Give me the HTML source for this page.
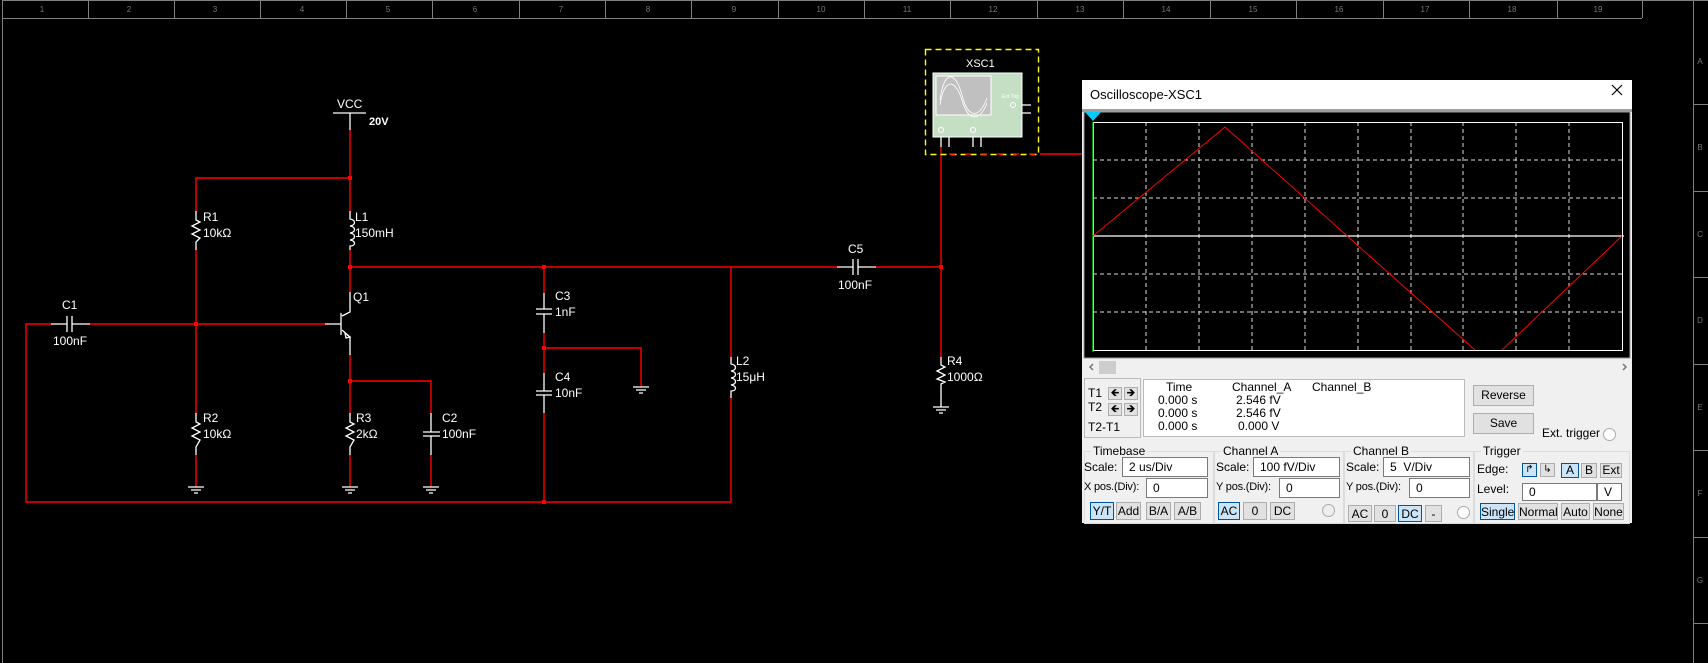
<!DOCTYPE html>
<html><head><meta charset="utf-8">
<style>
html,body{margin:0;padding:0;background:#000;}
body{width:1708px;height:663px;overflow:hidden;position:relative;font-family:"Liberation Sans",sans-serif;}
svg{position:absolute;left:0;top:0;}
.btn{position:absolute;background:#e1e1e1;border:1px solid #adadad;box-sizing:border-box;font-size:12px;text-align:center;line-height:16px;}
.sel{background:#cce4f7;border-color:#005499;}
.inp{position:absolute;background:#fff;border:1px solid #7a7a7a;box-sizing:border-box;font-size:12px;line-height:18px;padding-left:6px;}
.lab{position:absolute;font-size:12px;white-space:nowrap;}
.sm{font-size:11px;letter-spacing:-0.2px;}
.grp{position:absolute;border:1px solid #dcdcdc;box-sizing:border-box;}
.gt{position:absolute;background:#f0f0f0;padding:0 2px;font-size:12px;top:-8px;left:6px;line-height:14px;}
.rad{position:absolute;width:13px;height:13px;border-radius:50%;border:1px solid #aaa;background:#fff;box-sizing:border-box;}
</style></head><body>
<svg width="1708" height="663" viewBox="0 0 1708 663" font-family="Liberation Sans, sans-serif">
<g stroke="#808080" stroke-width="1" fill="none">
<line x1="2" y1="0.5" x2="1708" y2="0.5"/>
<line x1="2" y1="18.5" x2="1642" y2="18.5"/>
<line x1="2.5" y1="0" x2="2.5" y2="663"/>
<line x1="1693.5" y1="0" x2="1693.5" y2="663"/>
<line x1="1642.5" y1="0" x2="1642.5" y2="18"/>
<line x1="88.5" y1="0" x2="88.5" y2="18"/><line x1="174.5" y1="0" x2="174.5" y2="18"/><line x1="260.5" y1="0" x2="260.5" y2="18"/><line x1="346.5" y1="0" x2="346.5" y2="18"/><line x1="432.5" y1="0" x2="432.5" y2="18"/><line x1="519.5" y1="0" x2="519.5" y2="18"/><line x1="605.5" y1="0" x2="605.5" y2="18"/><line x1="691.5" y1="0" x2="691.5" y2="18"/><line x1="778.5" y1="0" x2="778.5" y2="18"/><line x1="864.5" y1="0" x2="864.5" y2="18"/><line x1="950.5" y1="0" x2="950.5" y2="18"/><line x1="1037.5" y1="0" x2="1037.5" y2="18"/><line x1="1123.5" y1="0" x2="1123.5" y2="18"/><line x1="1210.5" y1="0" x2="1210.5" y2="18"/><line x1="1296.5" y1="0" x2="1296.5" y2="18"/><line x1="1383.5" y1="0" x2="1383.5" y2="18"/><line x1="1469.5" y1="0" x2="1469.5" y2="18"/><line x1="1557.5" y1="0" x2="1557.5" y2="18"/>
<line x1="1693" y1="104.5" x2="1708" y2="104.5"/><line x1="1693" y1="191.5" x2="1708" y2="191.5"/><line x1="1693" y1="277.5" x2="1708" y2="277.5"/><line x1="1693" y1="364.5" x2="1708" y2="364.5"/><line x1="1693" y1="450.5" x2="1708" y2="450.5"/><line x1="1693" y1="537.5" x2="1708" y2="537.5"/><line x1="1693" y1="623.5" x2="1708" y2="623.5"/>
</g>
<g fill="#777" font-size="8" text-anchor="middle">
<text x="42" y="12">1</text><text x="129" y="12">2</text><text x="215" y="12">3</text><text x="302" y="12">4</text><text x="388" y="12">5</text><text x="475" y="12">6</text><text x="561" y="12">7</text><text x="648" y="12">8</text><text x="734" y="12">9</text><text x="821" y="12">10</text><text x="907" y="12">11</text><text x="993" y="12">12</text><text x="1080" y="12">13</text><text x="1166" y="12">14</text><text x="1253" y="12">15</text><text x="1339" y="12">16</text><text x="1425" y="12">17</text><text x="1512" y="12">18</text><text x="1598" y="12">19</text>
<text x="1700" y="64">A</text><text x="1700" y="150">B</text><text x="1700" y="237">C</text><text x="1700" y="323">D</text><text x="1700" y="410">E</text><text x="1700" y="496">F</text><text x="1700" y="583">G</text>
</g>
<g stroke="#f00" stroke-width="1.4" fill="none">
<path d="M350 130V211M350 250V292"/>
<path d="M196 211V178H350"/>
<path d="M196 250V413M196 455V487"/>
<path d="M90 324H325"/>
<path d="M51 324H26V502H731V398M731 357V267"/>
<path d="M350 355V413M350 455V487"/>
<path d="M350 381H431V413M431 455V487"/>
<path d="M350 267H837M876 267H941"/>
<path d="M544 267V293M544 333V373M544 413V502"/>
<path d="M544 348H641V387"/>
<path d="M941 147V357"/>
<path d="M1040 154H1084"/>
</g>
<g fill="#f00">
<rect x="348" y="176" width="4" height="4"/><rect x="194" y="322" width="4" height="4"/><rect x="348" y="265" width="4" height="4"/><rect x="348" y="379" width="4" height="4"/><rect x="542" y="265" width="4" height="4"/><rect x="542" y="346" width="4" height="4"/><rect x="542" y="500" width="4" height="4"/><rect x="939" y="265" width="4" height="4"/>
</g>
<g stroke="#fff" stroke-width="1.3" fill="none">
<path d="M333 113H366M350 113V130"/>
<path d="M196 211V220L200 222L192 226L200 230L192 234L200 238L196 242V250"/>
<path d="M350 211V219C356 220 356 225 350 226C356 227 356 232 350 233C356 234 356 239 350 240C356 241 356 246 350 246V250"/>
<path d="M350 292V312L342 316M341 313V335M325 324H341M342 330L350 337V355"/>
<path d="M345 333L350 337L346 338Z"/>
<path d="M196 413V422L200 424L192 428L200 432L192 436L200 440L196 447V455"/>
<path d="M350 413V422L354 424L346 428L354 432L346 436L354 440L350 447V455"/>
<path d="M431 413V432M423 432H440M423 436H440M431 436V455"/>
<path d="M51 324H67M67 316V332M72 316V332M72 324H90"/>
<path d="M837 267H853M853 259V275M858 259V275M858 267H876"/>
<path d="M544 293V309M536 309H552M536 314H552M544 314V333"/>
<path d="M544 373V391M536 391H552M536 395H552M544 395V413"/>
<path d="M731 357V364C737 365 737 370 731 371C737 372 737 377 731 378C737 379 737 384 731 385C737 386 737 391 731 391V398"/>
<path d="M941 357V365L945 367L937 371L945 375L937 379L945 382L941 384V388"/>
<path d="M188 487H204M191 490H201M194 493H198"/>
<path d="M342 487H358M345 490H355M348 493H352"/>
<path d="M423 487H439M426 490H436M429 493H433"/>
<path d="M633 387H649M636 390H646M639 393H643"/>
<path d="M941 388V407M933 407H949M936 410H946M939 413H943"/>
<path d="M941 130V147M949 130V147M973 130V147M981 130V147M949 130H941"/>
<path d="M1013 105H1031M1017 113H1031M1017 105V113"/>
</g>
<rect x="925.5" y="49.5" width="113" height="105" fill="none" stroke="#ff0" stroke-width="1.4" stroke-dasharray="6,4"/>
<path d="M949 154H1040" stroke="#f00" stroke-width="1.4" stroke-dasharray="6,10"/>
<rect x="933" y="73" width="89" height="64" fill="#c4dfc4" stroke="#fff" stroke-width="1"/>
<rect x="936" y="76" width="55" height="39" fill="#c0c0c0" stroke="#fff" stroke-width="1"/>
<path d="M940 100C944 70 955 70 962 95C968 120 980 118 987 98M940 105C944 78 955 78 962 100C968 122 980 122 987 103" stroke="#fff" fill="none" stroke-width="0.8"/>
<circle cx="941" cy="130" r="2.5" fill="none" stroke="#fff"/><circle cx="973" cy="130" r="2.5" fill="none" stroke="#fff"/><circle cx="1013" cy="105" r="2.5" fill="none" stroke="#fff"/>
<text x="1002" y="98" fill="#fff" font-size="5">Ext Trig</text>
<g fill="#fff" font-size="12">
<text x="337" y="108">VCC</text>
<text x="369" y="125" font-weight="bold" font-size="11">20V</text>
<text x="203" y="221">R1</text><text x="203" y="237">10kΩ</text>
<text x="355" y="221">L1</text><text x="355" y="237">150mH</text>
<text x="353" y="301">Q1</text>
<text x="62" y="309">C1</text><text x="53" y="345">100nF</text>
<text x="203" y="422">R2</text><text x="203" y="438">10kΩ</text>
<text x="356" y="422">R3</text><text x="356" y="438">2kΩ</text>
<text x="442" y="422">C2</text><text x="442" y="438">100nF</text>
<text x="555" y="300">C3</text><text x="555" y="316">1nF</text>
<text x="555" y="381">C4</text><text x="555" y="397">10nF</text>
<text x="736" y="365">L2</text><text x="736" y="381">15μH</text>
<text x="848" y="253">C5</text><text x="838" y="289">100nF</text>
<text x="947" y="365">R4</text><text x="947" y="381">1000Ω</text>
<text x="966" y="67" font-size="11">XSC1</text>
</g>
<rect x="1082" y="80" width="550" height="443" fill="#f0f0f0"/>
<rect x="1082" y="80" width="550" height="29" fill="#fff"/>
<rect x="1082" y="109" width="550" height="3" fill="#a0a0a0"/>
<rect x="1084" y="112" width="546" height="246" fill="#000" stroke="#9a9a9a" stroke-width="1"/>
<g stroke="#ddd" stroke-width="1" stroke-dasharray="4,3">
<path d="M1146 122V350M1199 122V350M1252 122V350M1305 122V350M1358 122V350M1411 122V350M1463 122V350M1516 122V350M1569 122V350"/>
<path d="M1093 160H1622M1093 198H1622M1093 274H1622M1093 312H1622"/>
</g>
<rect x="1093.5" y="122.5" width="529" height="228" fill="none" stroke="#fff" stroke-width="1"/>
<path d="M1093 236H1624" stroke="#fff" stroke-width="1.2"/>
<path d="M1093 122V352" stroke="#0f0" stroke-width="1.2"/>
<path d="M1085 112H1101L1093 121Z" fill="#0cf"/>
<path d="M1093 236L1225 127L1475 350M1502 350L1622 236" stroke="#f00" stroke-width="1" fill="none"/>
<path d="M1612 85L1622 95M1622 85L1612 95" stroke="#000" stroke-width="1.2"/>
<text x="1090" y="99" font-size="13" fill="#000">Oscilloscope-XSC1</text>
<path d="M1093 364L1090 367L1093 370" stroke="#777" fill="none" stroke-width="1.5"/>
<path d="M1623 364L1626 367L1623 370" stroke="#777" fill="none" stroke-width="1.5"/>
<rect x="1099" y="361" width="17" height="13" fill="#cdcdcd"/>
</svg>

<div class="grp" style="left:1084px;top:378px;width:57px;height:60px;border-color:#bbb;"></div>
<div class="lab" style="left:1088px;top:386px;">T1</div>
<div class="lab" style="left:1088px;top:400px;">T2</div>
<div class="lab" style="left:1088px;top:420px;">T2-T1</div>
<div class="btn" style="left:1108px;top:387px;width:14px;height:13px;line-height:11px;font-size:11px;">&#129144;</div>
<div class="btn" style="left:1124px;top:387px;width:14px;height:13px;line-height:11px;font-size:11px;">&#129146;</div>
<div class="btn" style="left:1108px;top:403px;width:14px;height:13px;line-height:11px;font-size:11px;">&#129144;</div>
<div class="btn" style="left:1124px;top:403px;width:14px;height:13px;line-height:11px;font-size:11px;">&#129146;</div>
<div style="position:absolute;left:1143px;top:379px;width:322px;height:58px;background:#fff;border:1px solid #bbb;box-sizing:border-box;"></div>
<div class="lab" style="left:1166px;top:380px;">Time</div>
<div class="lab" style="left:1232px;top:380px;">Channel_A</div>
<div class="lab" style="left:1312px;top:380px;">Channel_B</div>
<div class="lab" style="left:1158px;top:393px;">0.000 s</div>
<div class="lab" style="left:1158px;top:406px;">0.000 s</div>
<div class="lab" style="left:1158px;top:419px;">0.000 s</div>
<div class="lab" style="left:1236px;top:393px;">2.546 fV</div>
<div class="lab" style="left:1236px;top:406px;">2.546 fV</div>
<div class="lab" style="left:1238px;top:419px;">0.000 V</div>
<div class="btn" style="left:1473px;top:385px;width:61px;height:21px;line-height:19px;">Reverse</div>
<div class="btn" style="left:1473px;top:413px;width:61px;height:21px;line-height:19px;">Save</div>
<div class="lab" style="left:1542px;top:426px;">Ext. trigger</div>
<div class="rad" style="left:1603px;top:428px;"></div>

<div class="grp" style="left:1084px;top:451px;width:130px;height:73px;"><span class="gt">Timebase</span></div>
<div class="grp" style="left:1214px;top:451px;width:130px;height:73px;"><span class="gt">Channel A</span></div>
<div class="grp" style="left:1344px;top:451px;width:130px;height:73px;"><span class="gt">Channel B</span></div>
<div class="grp" style="left:1474px;top:451px;width:156px;height:73px;"><span class="gt">Trigger</span></div>

<div class="lab" style="left:1084px;top:460px;">Scale:</div>
<div class="inp" style="left:1122px;top:457px;width:86px;height:20px;">2 us/Div</div>
<div class="lab sm" style="left:1084px;top:481px;">X pos.(Div):</div>
<div class="inp" style="left:1146px;top:478px;width:62px;height:20px;">0</div>
<div class="btn sel" style="left:1090px;top:502px;width:24px;height:18px;">Y/T</div>
<div class="btn" style="left:1116px;top:502px;width:25px;height:18px;">Add</div>
<div class="btn" style="left:1146px;top:502px;width:25px;height:18px;">B/A</div>
<div class="btn" style="left:1174px;top:502px;width:27px;height:18px;">A/B</div>

<div class="lab" style="left:1216px;top:460px;">Scale:</div>
<div class="inp" style="left:1253px;top:457px;width:87px;height:20px;">100 fV/Div</div>
<div class="lab sm" style="left:1216px;top:481px;">Y pos.(Div):</div>
<div class="inp" style="left:1279px;top:478px;width:61px;height:20px;">0</div>
<div class="btn sel" style="left:1218px;top:502px;width:22px;height:18px;">AC</div>
<div class="btn" style="left:1243px;top:502px;width:24px;height:18px;">0</div>
<div class="btn" style="left:1270px;top:502px;width:25px;height:18px;">DC</div>
<div class="rad" style="left:1322px;top:504px;background:#eee;"></div>

<div class="lab" style="left:1346px;top:460px;">Scale:</div>
<div class="inp" style="left:1383px;top:457px;width:87px;height:20px;">5&nbsp; V/Div</div>
<div class="lab sm" style="left:1346px;top:481px;">Y pos.(Div):</div>
<div class="inp" style="left:1409px;top:478px;width:61px;height:20px;">0</div>
<div class="btn" style="left:1348px;top:505px;width:24px;height:17px;">AC</div>
<div class="btn" style="left:1374px;top:505px;width:22px;height:17px;">0</div>
<div class="btn sel" style="left:1398px;top:505px;width:24px;height:17px;">DC</div>
<div class="btn" style="left:1425px;top:505px;width:17px;height:17px;">-</div>
<div class="rad" style="left:1457px;top:506px;"></div>

<div class="lab" style="left:1477px;top:462px;">Edge:</div>
<div class="btn sel" style="left:1522px;top:463px;width:15px;height:14px;line-height:12px;font-size:10px;">&#8625;</div>
<div class="btn" style="left:1540px;top:463px;width:15px;height:14px;line-height:12px;font-size:10px;">&#8627;</div>
<div class="btn sel" style="left:1561px;top:463px;width:18px;height:15px;line-height:13px;">A</div>
<div class="btn" style="left:1581px;top:463px;width:16px;height:15px;line-height:13px;">B</div>
<div class="btn" style="left:1600px;top:463px;width:22px;height:15px;line-height:13px;">Ext</div>
<div class="lab" style="left:1477px;top:482px;">Level:</div>
<div class="inp" style="left:1522px;top:483px;width:75px;height:18px;line-height:16px;">0</div>
<div class="inp" style="left:1597px;top:483px;width:25px;height:18px;line-height:16px;">V</div>
<div class="btn sel" style="left:1480px;top:503px;width:35px;height:17px;">Single</div>
<div class="btn" style="left:1518px;top:503px;width:40px;height:17px;">Normal</div>
<div class="btn" style="left:1561px;top:503px;width:29px;height:17px;">Auto</div>
<div class="btn" style="left:1593px;top:503px;width:31px;height:17px;">None</div>
</body></html>
